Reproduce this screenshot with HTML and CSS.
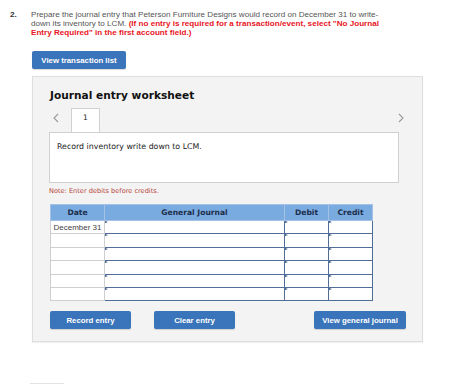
FILE: index.html
```html
<!DOCTYPE html>
<html>
<head>
<meta charset="utf-8">
<link rel="stylesheet" href="styles.css">
</head>
<body>
<div class="question">
  <div class="qnum">2.</div>
  <div class="qtext">
    <div class="qline">Prepare the journal entry that Peterson Furniture Designs would record on December 31 to write-</div>
    <div class="qline">down its inventory to LCM. <span class="req">(If no entry is required for a transaction/event, select "No Journal</span></div>
    <div class="qline"><span class="req">Entry Required" in the first account field.)</span></div>
  </div>
</div>
<button class="btn btn-list">View transaction list</button>
<div class="panel">
  <h2 class="title">Journal entry worksheet</h2>
  <div class="tabrow">
    <svg class="arrow" width="6" height="10" viewBox="0 0 6 10"><path d="M5 1 L1 5 L5 9" fill="none" stroke="#9a9a9a" stroke-width="1.1"/></svg>
    <div class="tab">1</div>
    <svg class="arrow arrow-r" width="6" height="10" viewBox="0 0 6 10"><path d="M1 1 L5 5 L1 9" fill="none" stroke="#9a9a9a" stroke-width="1.1"/></svg>
  </div>
  <div class="desc">Record inventory write down to LCM.</div>
  <div class="note">Note: Enter debits before credits.</div>
  <table class="journal">
    <thead>
      <tr><th class="c-date">Date</th><th class="c-gj">General Journal</th><th class="c-dr">Debit</th><th class="c-cr">Credit</th></tr>
    </thead>
    <tbody>
      <tr><td class="date">December 31</td><td class="in"></td><td class="in"></td><td class="in"></td></tr>
      <tr><td class="date"></td><td class="in"></td><td class="in"></td><td class="in"></td></tr>
      <tr><td class="date"></td><td class="in"></td><td class="in"></td><td class="in"></td></tr>
      <tr><td class="date"></td><td class="in"></td><td class="in"></td><td class="in"></td></tr>
      <tr><td class="date"></td><td class="in"></td><td class="in"></td><td class="in"></td></tr>
      <tr><td class="date"></td><td class="in"></td><td class="in"></td><td class="in"></td></tr>
    </tbody>
  </table>
  <div class="actions">
    <button class="btn btn-act">Record entry</button>
    <button class="btn btn-act">Clear entry</button>
    <button class="btn btn-act btn-wide">View general journal</button>
  </div>
</div>
<div class="footer-tab"></div>
</body>
</html>
```

FILE: styles.css
```css
html, body {
  margin: 0;
  padding: 0;
  background: #ffffff;
}
body {
  padding: 10px 0 0 0;
  font-family: "Liberation Sans", Arial, sans-serif;
  color: #444;
}
.question {
  display: flex;
  font-size: 8.1px;
  line-height: 9px;
}
.qnum {
  width: 31px;
  padding-left: 10px;
  box-sizing: border-box;
  font-weight: bold;
  color: #333;
  flex: none;
}
.qtext {
  color: #555;
}
.qline {
  white-space: nowrap;
}
.req {
  color: #e8141e;
  font-weight: bold;
}
.btn {
  display: block;
  border: none;
  background: #3a74ba;
  color: #fff;
  font-family: "Liberation Sans", Arial, sans-serif;
  font-weight: bold;
  font-size: 7.8px;
  border-radius: 2px;
  height: 18px;
  padding: 0;
  box-shadow: 0 1px 1px rgba(0,0,0,0.15);
}
.btn-list {
  margin: 14px 0 0 32px;
  width: 94px;
}
.panel {
  margin: 7px 0 0 32px;
  width: 391px;
  box-sizing: border-box;
  background: #f3f3f3;
  border: 1px solid #dedede;
  padding: 11px 23px 12px 16px;
  box-shadow: 0 1px 1px rgba(0,0,0,0.06);
}
.title {
  margin: 0 0 0 1px;
  font-family: "DejaVu Sans", Verdana, sans-serif;
  font-size: 10.6px;
  line-height: 14px;
  font-weight: bold;
  color: #111;
}
.tabrow {
  display: flex;
  align-items: flex-start;
  margin-top: 6px;
  height: 24px;
  position: relative;
  z-index: 1;
}
.arrow {
  margin: 5px 0 0 4px;
  flex: none;
}
.arrow-r {
  margin: 5px -5px 0 auto;
}
.tab {
  margin-left: 12px;
  width: 29px;
  height: 24px;
  box-sizing: border-box;
  background: #fff;
  border: 1px solid #d0d0d0;
  border-bottom: none;
  text-align: center;
  font-family: "DejaVu Sans", Verdana, sans-serif;
  font-size: 7.5px;
  line-height: 18px;
  color: #222;
}
.desc {
  background: #fff;
  border: 1px solid #d0d0d0;
  height: 51px;
  box-sizing: border-box;
  padding: 9px 7px;
  font-family: "DejaVu Sans", Verdana, sans-serif;
  font-size: 7.85px;
  line-height: 10px;
  color: #222;
}
.note {
  margin-top: 4px;
  font-family: "DejaVu Sans", Verdana, sans-serif;
  font-size: 6.6px;
  line-height: 9px;
  color: #b8443a;
}
.journal {
  margin: 8px 0 0 1px;
  border-collapse: collapse;
  table-layout: fixed;
  width: 318px;
}
.journal th {
  background: #79aae0;
  border: 1px solid #a3c2e6;
  height: 15px;
  padding: 0;
  font-family: "DejaVu Sans", Verdana, sans-serif;
  font-size: 7.6px;
  font-weight: bold;
  color: #1d2f4a;
}
.c-date { width: 53px; }
.c-gj { width: 179px; }
.c-dr { width: 43px; }
.c-cr { width: 43px; }
.journal td {
  height: 13.4px;
  padding: 0;
  box-sizing: border-box;
  background: #fff;
}
.journal td.date {
  border: 1px solid #cfcfcf;
  font-size: 8px;
  color: #444;
  text-align: center;
  white-space: nowrap;
}
.journal td.in {
  border: 1.5px solid #4f6f98;
  position: relative;
}
.journal td.in::before {
  content: "";
  position: absolute;
  left: 0;
  top: 0;
  border-left: 3px solid #2f4f7f;
  border-top: 1.5px solid transparent;
  border-bottom: 1.5px solid transparent;
}
.actions {
  display: flex;
  margin: 10px -7px 0 1px;
}
.btn-act {
  width: 81px;
  margin-right: 23px;
}
.btn-wide {
  width: 92px;
  margin: 0 0 0 auto;
}
.footer-tab {
  margin: 41px 0 0 30px;
  width: 34px;
  height: 3px;
  border-top: 1px solid #e2e2e2;
}
```
